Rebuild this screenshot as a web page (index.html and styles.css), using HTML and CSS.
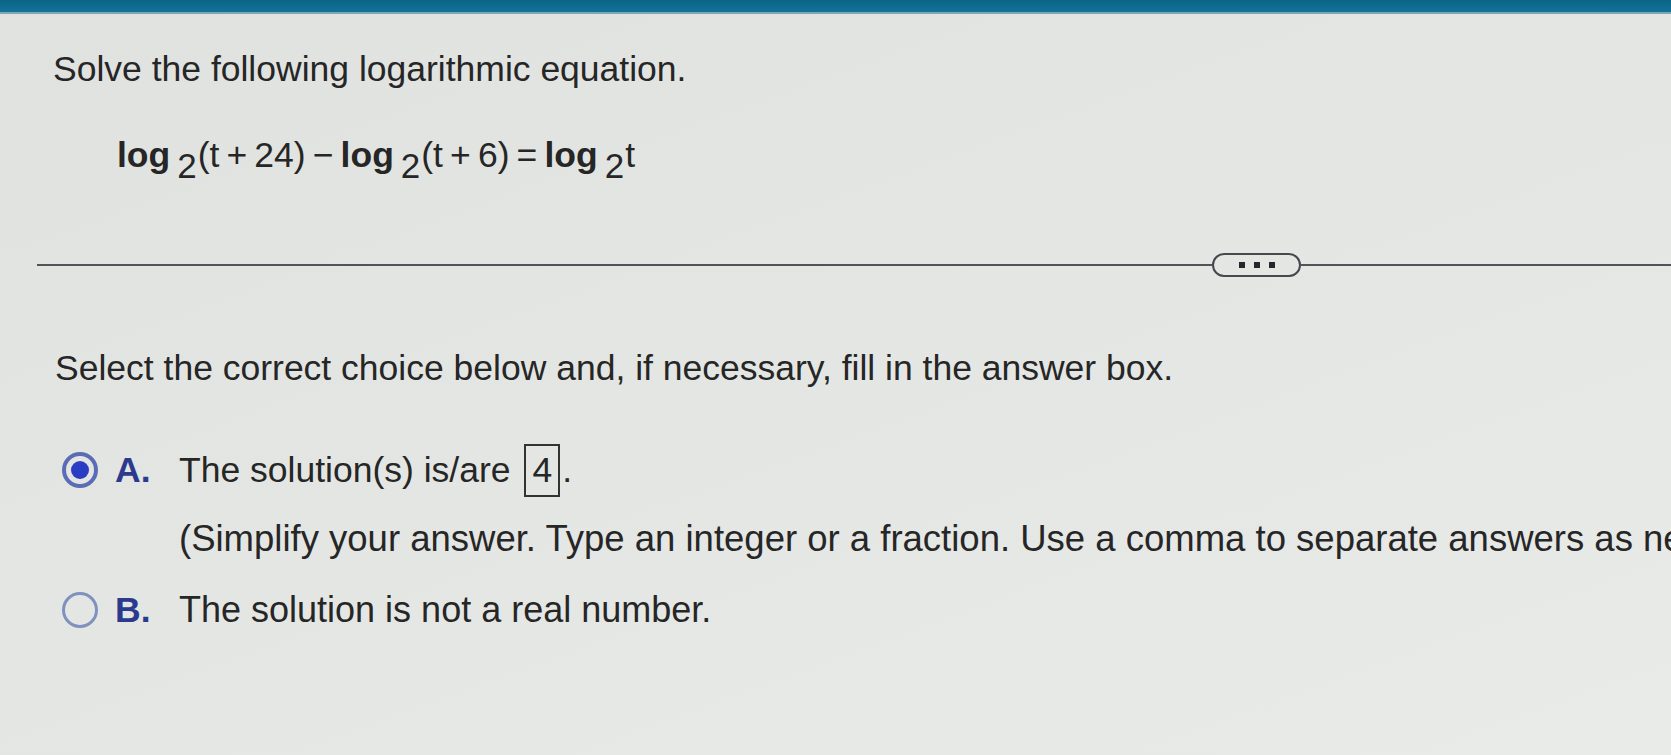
FILE: index.html
```html
<!DOCTYPE html>
<html>
<head>
<meta charset="utf-8">
<link rel="stylesheet" href="styles.css">
</head>
<body>
<div class="topbar"></div>
<main class="page">
  <h1 class="prompt">Solve the following logarithmic equation.</h1>
  <div class="equation">
    <b>log</b><sub>2</sub>(t&#8201;+&#8201;24)&#8201;−&#8201;<b>log</b><sub>2</sub>(t&#8201;+&#8201;6)&#8201;=&#8201;<b>log</b><sub>2</sub>t
  </div>
  <div class="divider">
    <span class="line left"></span>
    <span class="pill"><i></i><i></i><i></i></span>
    <span class="line right"></span>
  </div>
  <p class="instr">Select the correct choice below and, if necessary, fill in the answer box.</p>
  <div class="choices">
    <div class="choice">
      <span class="radio checked"></span>
      <span class="letter">A.</span>
      <div class="body">
        <div class="main">The solution(s) is/are <span class="box">4</span>.</div>
        <div class="hint">(Simplify your answer. Type an integer or a fraction. Use a comma to separate answers as needed.)</div>
      </div>
    </div>
    <div class="choice second">
      <span class="radio"></span>
      <span class="letter">B.</span>
      <div class="body">
        <div class="main">The solution is not a real number.</div>
      </div>
    </div>
  </div>
</main>
</body>
</html>
```
FILE: styles.css
```css
html, body {
  margin: 0;
  padding: 0;
  width: 1671px;
  height: 755px;
  overflow: hidden;
}
body {
  background: linear-gradient(160deg, #e0e2e0 0%, #e5e7e5 60%, #e9ebe9 100%);
  font-family: "Liberation Sans", Arial, sans-serif;
  color: #262626;
}
.topbar {
  height: 12px;
  background: linear-gradient(180deg, #0b6385 0%, #13739a 100%);
  border-bottom: 2px solid #7ea6b6;
}
.page {
  padding: 0 0 0 53px;
}
.prompt {
  margin: 0;
  padding-top: 33px;
  font-size: 35.5px;
  font-weight: normal;
  line-height: 44px;
}
.equation {
  margin: 42px 0 0 64px;
  font-size: 35.5px;
  line-height: 44px;
  white-space: nowrap;
}
.equation b { font-weight: bold; }
.equation sub {
  font-size: 35px;
  vertical-align: -11px;
  line-height: 0;
  margin: 0 1px 0 7px;
}
.divider {
  display: flex;
  align-items: center;
  margin: 75px 0 0 -16px;
  height: 26px;
}
.line {
  height: 2px;
  background: #505357;
}
.line.left { width: 1175px; }
.line.right { flex: 1; }
.pill {
  width: 89px;
  height: 24px;
  box-sizing: border-box;
  border: 2px solid #45484d;
  border-radius: 12px;
  display: flex;
  justify-content: center;
  align-items: center;
  gap: 9px;
  flex: none;
}
.pill i {
  width: 6px;
  height: 6px;
  background: #26272c;
  display: block;
}
.instr {
  margin: 68px 0 0 2px;
  font-size: 35.5px;
  line-height: 44px;
}
.choices {
  margin-top: 54px;
  margin-left: 9px;
}
.choice {
  display: flex;
  align-items: flex-start;
}
.choice.second {
  margin-top: 23px;
}
.radio {
  width: 36px;
  height: 36px;
  border: 3px solid #7e92bd;
  border-radius: 50%;
  box-sizing: border-box;
  margin-top: 8px;
  display: flex;
  align-items: center;
  justify-content: center;
  flex: none;
}
.radio.checked {
  border: 4px solid #5a6cb6;
}
.radio.checked::after {
  content: "";
  width: 18px;
  height: 18px;
  border-radius: 50%;
  background: #2a3ec4;
}
.letter {
  font-size: 35.5px;
  font-weight: bold;
  color: #2c3a8e;
  line-height: 52px;
  width: 64px;
  margin-left: 17px;
  flex: none;
}
.body {
  font-size: 35.5px;
  white-space: nowrap;
}
.main {
  line-height: 52px;
}
.box {
  display: inline-block;
  box-sizing: border-box;
  border: 2px solid #333;
  width: 36px;
  height: 53px;
  line-height: 49px;
  text-align: center;
  vertical-align: middle;
  margin: -4px 2px 0 4px;
}
.hint {
  margin-top: 20px;
  line-height: 44px;
  font-size: 36.5px;
}
.second .main {
  font-size: 36px;
}
```
